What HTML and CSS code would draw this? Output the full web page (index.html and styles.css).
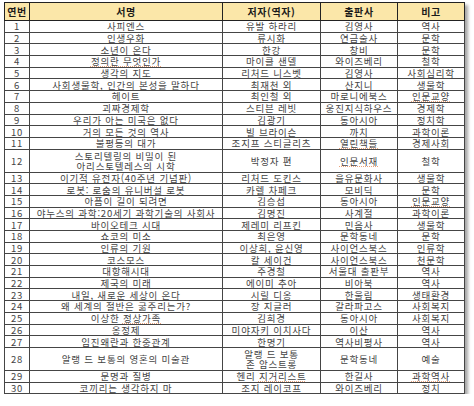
FILE: index.html
```html
<!DOCTYPE html>
<html lang="ko">
<head>
<meta charset="utf-8">
<title>도서 목록</title>
<link rel="stylesheet" href="styles.css">
</head>
<body>
<table class="books">
  <colgroup>
    <col class="c-no"><col class="c-title"><col class="c-author"><col class="c-pub"><col class="c-note">
  </colgroup>
  <thead>
    <tr class="head"><th>연번</th><th>서명</th><th>저자(역자)</th><th>출판사</th><th>비고</th></tr>
  </thead>
  <tbody>
    <tr><td>1</td><td>사피엔스</td><td>유발 하라리</td><td>김영사</td><td>역사</td></tr>
    <tr><td>2</td><td><span class="sp">인생우화</span></td><td>류시화</td><td>연금술사</td><td>문학</td></tr>
    <tr><td>3</td><td>소년이 온다</td><td>한강</td><td>창비</td><td>문학</td></tr>
    <tr><td>4</td><td><span class="sp">정의란 무엇인가</span></td><td>마이클 샌델</td><td>와이즈베리</td><td>철학</td></tr>
    <tr><td>5</td><td>생각의 지도</td><td>리처드 니스벳</td><td>김영사</td><td>사회심리학</td></tr>
    <tr><td>6</td><td>사회생물학, 인간의 본성을 <span class="sp">말하다</span></td><td>최재천 외</td><td>산지니</td><td>생물학</td></tr>
    <tr><td>7</td><td>헤이트</td><td>최인철 외</td><td>마로니에북스</td><td><span class="sp">인문교양</span></td></tr>
    <tr><td>8</td><td>괴짜경제학</td><td>스티븐 레빗</td><td>웅진지식하우스</td><td>경제학</td></tr>
    <tr><td>9</td><td>우리가 아는 <span class="sp">미국은 없다</span></td><td>김광기</td><td>동아시아</td><td>정치학</td></tr>
    <tr><td>10</td><td>거의 모든 것의 역사</td><td>빌 브라이슨</td><td>까치</td><td>과학이론</td></tr>
    <tr><td>11</td><td>불평등의 대가</td><td>조지프 스티글리츠</td><td><span class="sp">열린책들</span></td><td>경제사회</td></tr>
    <tr class="dbl"><td>12</td><td>스토리텔링의 비밀이 된<br>아리스토텔레스의 시학</td><td>박정자 편</td><td><span class="sp">인문서재</span></td><td>철학</td></tr>
    <tr><td>13</td><td>이기적 유전자(40주년 <span class="sp">기념판)</span></td><td>리처드 도킨스</td><td>을유문화사</td><td>생물학</td></tr>
    <tr><td>14</td><td><span class="sp">로봇: 로숨의</span> 유니버설 로봇</td><td>카렐 차페크</td><td><span class="sp">모비딕</span></td><td>문학</td></tr>
    <tr><td>15</td><td>아픔이 길이 되려면</td><td>김승섭</td><td>동아시아</td><td><span class="sp">인문교양</span></td></tr>
    <tr><td>16</td><td>야누스의 과학:20세기 과학기술의 사회사</td><td>김명진</td><td>사계절</td><td>과학이론</td></tr>
    <tr><td>17</td><td>바이오테크 시대</td><td><span class="sp">제레미</span> 리프킨</td><td>민음사</td><td>생물학</td></tr>
    <tr><td>18</td><td>쇼코의 미소</td><td>최은영</td><td>문학동네</td><td>문학</td></tr>
    <tr><td>19</td><td>인류의 기원</td><td>이상희, 윤신영</td><td>사이언스북스</td><td>인류학</td></tr>
    <tr><td>20</td><td>코스모스</td><td>칼 세이건</td><td>사이언스북스</td><td>천문학</td></tr>
    <tr><td>21</td><td>대항해시대</td><td>주경철</td><td>서울대 출판부</td><td>역사</td></tr>
    <tr><td>22</td><td>제국의 미래</td><td>에이미 추아</td><td>비아북</td><td>역사</td></tr>
    <tr><td>23</td><td>내일, 새로운 세상이 <span class="sp">온다</span></td><td>시릴 <span class="sp">디옹</span></td><td>한울림</td><td>생태환경</td></tr>
    <tr><td>24</td><td>왜 세계의 절반은 굶주리는가?</td><td>장 지글러</td><td>갈라파고스</td><td>사회복지</td></tr>
    <tr><td>25</td><td>이상한 <span class="sp">정상가족</span></td><td>김희경</td><td>동아시아</td><td>사회복지</td></tr>
    <tr><td>26</td><td>옹정제</td><td>미야자키 <span class="sp">이치사다</span></td><td>이산</td><td>역사</td></tr>
    <tr><td>27</td><td>임진왜란과 한중관계</td><td>한명기</td><td>역사비평사</td><td>역사</td></tr>
    <tr class="dbl"><td>28</td><td>알랭 드 보통의 영혼의 미술관</td><td>알랭 드 보통<br>존 암스트롱</td><td>문학동네</td><td>예술</td></tr>
    <tr><td>29</td><td>문명과 질병</td><td>헨리 <span class="sp">지거리스트</span></td><td>한길사</td><td><span class="sp">과학역사</span></td></tr>
    <tr><td>30</td><td>코끼리는 생각하지 마</td><td>조지 <span class="sp">레이코프</span></td><td>와이즈베리</td><td>정치</td></tr>
  </tbody>
</table>
</body>
</html>
```
FILE: styles.css
```css
html, body {
  margin: 0;
  padding: 0;
  background: #ffffff;
}

body {
  padding: 2px 0 0 4px;
  font-family: "Noto Sans CJK KR", "Noto Sans", sans-serif;
  color: #444444;
}

.books {
  width: 460px;
  table-layout: fixed;
  border-collapse: collapse;
  box-shadow: 3px 3px 3px rgba(0, 0, 0, 0.35);
}

.c-no { width: 25px; }
.c-title { width: 193px; }
.c-author { width: 98px; }
.c-pub { width: 77px; }
.c-note { width: 67px; }

.books th,
.books td {
  border: 1px solid #454545;
  padding: 0;
  text-align: center;
  vertical-align: middle;
  white-space: nowrap;
  overflow: hidden;
  font-size: 9.5px;
  line-height: 10px;
  letter-spacing: 0.8px;
}

.books th {
  background: #fbe7a9;
  color: #1a1a1a;
  font-weight: 700;
  font-size: 10px;
  letter-spacing: 0.6px;
  border-color: #222222;
}

.head { height: 18px; }

.books tbody tr { height: 11.7px; }

.books tbody tr.dbl { height: 23px; }

.sp {
  text-decoration: underline dotted #e8a27c;
  text-underline-offset: 1px;
}
```
